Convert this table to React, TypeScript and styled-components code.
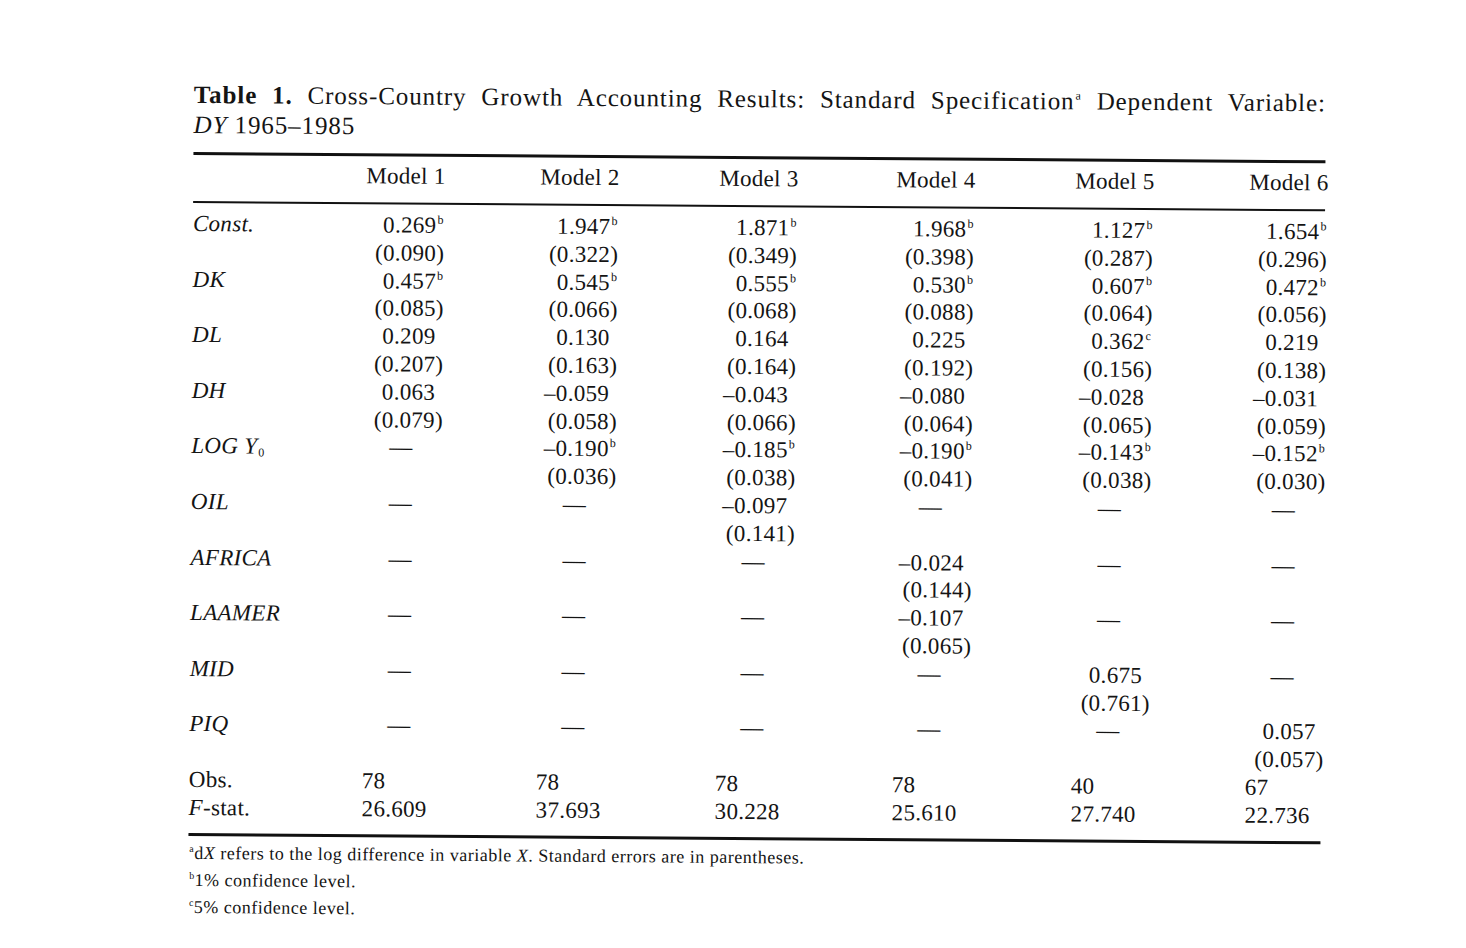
import React from "react";
import styled, { createGlobalStyle } from "styled-components";

const GlobalStyle = createGlobalStyle`
    body {
        margin: 0;
        background: #ffffff;
    }
`;

const Page = styled.div`
    padding: 80px 0 0 194px;
    height: 868px;
    overflow: hidden;
`;

// the scan is a little crooked, so the whole sheet is turned a touch
const Sheet = styled.div`
    width: 1132px;
    color: #141414;
    font-family: "Liberation Serif", "Times New Roman", serif;
    transform: rotate(0.42deg);
    transform-origin: 0 0;
`;

const CaptionLine = styled.div<{ $justify?: boolean }>`
    font-size: 25px;
    line-height: 30px;
    letter-spacing: 0.9px;
    white-space: nowrap;
    text-align: ${(p) => (p.$justify ? "justify" : "left")};
    text-align-last: ${(p) => (p.$justify ? "justify" : "left")};
`;

const Bold = styled.b`
    font-weight: 700;
`;

const Rule = styled.div<{ $weight: number; $gap: number }>`
    height: ${(p) => p.$weight}px;
    margin-top: ${(p) => p.$gap}px;
    background: #111;
`;

const Row = styled.div<{ $lines?: number }>`
    display: grid;
    grid-template-columns: 173px 174px 179px 177px 179px 174px 76px;
    font-size: 23px;
    letter-spacing: 0.3px;
    min-height: ${(p) => (p.$lines ?? 1) * 27.8}px;
`;

const HeaderRow = styled(Row)`
    padding: 6px 0 12px;
    line-height: 28px;
    white-space: nowrap;
`;

const Body = styled.div`
    padding-top: 7px;
`;

const Label = styled.div<{ $upright?: boolean }>`
    font-style: ${(p) => (p.$upright ? "normal" : "italic")};
    line-height: 27.8px;
    white-space: nowrap;
`;

const Cell = styled.div`
    display: flex;
    flex-direction: column;
`;

const Line = styled.div`
    height: 27.8px;
    line-height: 27.8px;
    white-space: nowrap;
`;

const Int = styled.span`
    display: inline-block;
    width: 29px;
    text-align: right;
`;

const Dash = styled.span`
    display: inline-block;
    padding-left: 25px;
`;

const Sup = styled.sup<{ $size?: number; $lift?: number }>`
    font-size: ${(p) => p.$size ?? 12}px;
    line-height: 0;
    position: relative;
    top: ${(p) => -(p.$lift ?? 9)}px;
    vertical-align: baseline;
    margin-left: 1px;
`;

const Sub = styled.sub`
    font-size: 12px;
    font-style: normal;
    line-height: 0;
    position: relative;
    top: 3px;
    vertical-align: baseline;
    margin-left: 1px;
`;

const Notes = styled.div`
    margin-top: 4px;
    font-size: 18px;
    letter-spacing: 0.5px;
    line-height: 27px;
`;

const Note = styled.div`
    white-space: nowrap;
`;

const Ital = styled.i`
    font-style: italic;
`;

type Entry = "dash" | [string, string, string] | null;

interface IVar {
    label: React.ReactNode;
    cells: Entry[];
}

const rows: IVar[] = [
    {
        label: "Const.",
        cells: [
            ["0.269", "b", "(0.090)"],
            ["1.947", "b", "(0.322)"],
            ["1.871", "b", "(0.349)"],
            ["1.968", "b", "(0.398)"],
            ["1.127", "b", "(0.287)"],
            ["1.654", "b", "(0.296)"],
        ],
    },
    {
        label: "DK",
        cells: [
            ["0.457", "b", "(0.085)"],
            ["0.545", "b", "(0.066)"],
            ["0.555", "b", "(0.068)"],
            ["0.530", "b", "(0.088)"],
            ["0.607", "b", "(0.064)"],
            ["0.472", "b", "(0.056)"],
        ],
    },
    {
        label: "DL",
        cells: [
            ["0.209", "", "(0.207)"],
            ["0.130", "", "(0.163)"],
            ["0.164", "", "(0.164)"],
            ["0.225", "", "(0.192)"],
            ["0.362", "c", "(0.156)"],
            ["0.219", "", "(0.138)"],
        ],
    },
    {
        label: "DH",
        cells: [
            ["0.063", "", "(0.079)"],
            ["–0.059", "", "(0.058)"],
            ["–0.043", "", "(0.066)"],
            ["–0.080", "", "(0.064)"],
            ["–0.028", "", "(0.065)"],
            ["–0.031", "", "(0.059)"],
        ],
    },
    {
        label: (
            <>
                LOG Y<Sub>0</Sub>
            </>
        ),
        cells: [
            "dash",
            ["–0.190", "b", "(0.036)"],
            ["–0.185", "b", "(0.038)"],
            ["–0.190", "b", "(0.041)"],
            ["–0.143", "b", "(0.038)"],
            ["–0.152", "b", "(0.030)"],
        ],
    },
    {
        label: "OIL",
        cells: ["dash", "dash", ["–0.097", "", "(0.141)"], "dash", "dash", "dash"],
    },
    {
        label: "AFRICA",
        cells: ["dash", "dash", "dash", ["–0.024", "", "(0.144)"], "dash", "dash"],
    },
    {
        label: "LAAMER",
        cells: ["dash", "dash", "dash", ["–0.107", "", "(0.065)"], "dash", "dash"],
    },
    {
        label: "MID",
        cells: ["dash", "dash", "dash", "dash", ["0.675", "", "(0.761)"], "dash"],
    },
    {
        label: "PIQ",
        cells: ["dash", "dash", "dash", "dash", "dash", ["0.057", "", "(0.057)"]],
    },
];

const obs = ["78", "78", "78", "78", "40", "67"];
const fstat = ["26.609", "37.693", "30.228", "25.610", "27.740", "22.736"];

// splits at the point so every column lines up on its decimals
function Num({ text, sup }: { text: string; sup?: string }) {
    const dot = text.indexOf(".");
    return (
        <Line>
            <Int>{text.slice(0, dot)}</Int>
            {text.slice(dot)}
            {sup ? <Sup>{sup}</Sup> : null}
        </Line>
    );
}

function ValueCell({ entry }: { entry: Entry }) {
    if (entry === "dash") {
        return (
            <Cell>
                <Line>
                    <Dash>—</Dash>
                </Line>
            </Cell>
        );
    }
    if (!entry) return <Cell />;
    const [coef, sup, se] = entry;
    return (
        <Cell>
            <Num text={coef} sup={sup} />
            <Num text={se} />
        </Cell>
    );
}

export default function App() {
    return (
        <>
            <GlobalStyle />
            <Page>
                <Sheet>
                    <CaptionLine $justify>
                        <Bold>Table 1.</Bold> Cross-Country Growth Accounting Results: Standard
                        Specification
                        <Sup $size={12} $lift={10}>
                            a
                        </Sup>{" "}
                        Dependent Variable:
                    </CaptionLine>
                    <CaptionLine>
                        <Ital>DY</Ital> 1965–1985
                    </CaptionLine>

                    <Rule $weight={3} $gap={12} />
                    <HeaderRow>
                        <div />
                        {[1, 2, 3, 4, 5, 6].map((n) => (
                            <div key={n}>Model {n}</div>
                        ))}
                    </HeaderRow>
                    <Rule $weight={2} $gap={0} />

                    <Body>
                        {rows.map((row, i) => (
                            <Row key={i} $lines={2}>
                                <Label>{row.label}</Label>
                                {row.cells.map((c, j) => (
                                    <ValueCell key={j} entry={c} />
                                ))}
                            </Row>
                        ))}
                        <Row>
                            <Label $upright>Obs.</Label>
                            {obs.map((v, j) => (
                                <Line key={j}>{v}</Line>
                            ))}
                        </Row>
                        <Row>
                            <Label $upright>
                                <Ital>F</Ital>-stat.
                            </Label>
                            {fstat.map((v, j) => (
                                <Line key={j}>{v}</Line>
                            ))}
                        </Row>
                    </Body>

                    <Rule $weight={3} $gap={11} />
                    <Notes>
                        <Note>
                            <Sup $size={10} $lift={7}>
                                a
                            </Sup>
                            d<Ital>X</Ital> refers to the log difference in variable <Ital>X</Ital>.
                            Standard errors are in parentheses.
                        </Note>
                        <Note>
                            <Sup $size={10} $lift={7}>
                                b
                            </Sup>
                            1% confidence level.
                        </Note>
                        <Note>
                            <Sup $size={10} $lift={7}>
                                c
                            </Sup>
                            5% confidence level.
                        </Note>
                    </Notes>
                </Sheet>
            </Page>
        </>
    );
}
